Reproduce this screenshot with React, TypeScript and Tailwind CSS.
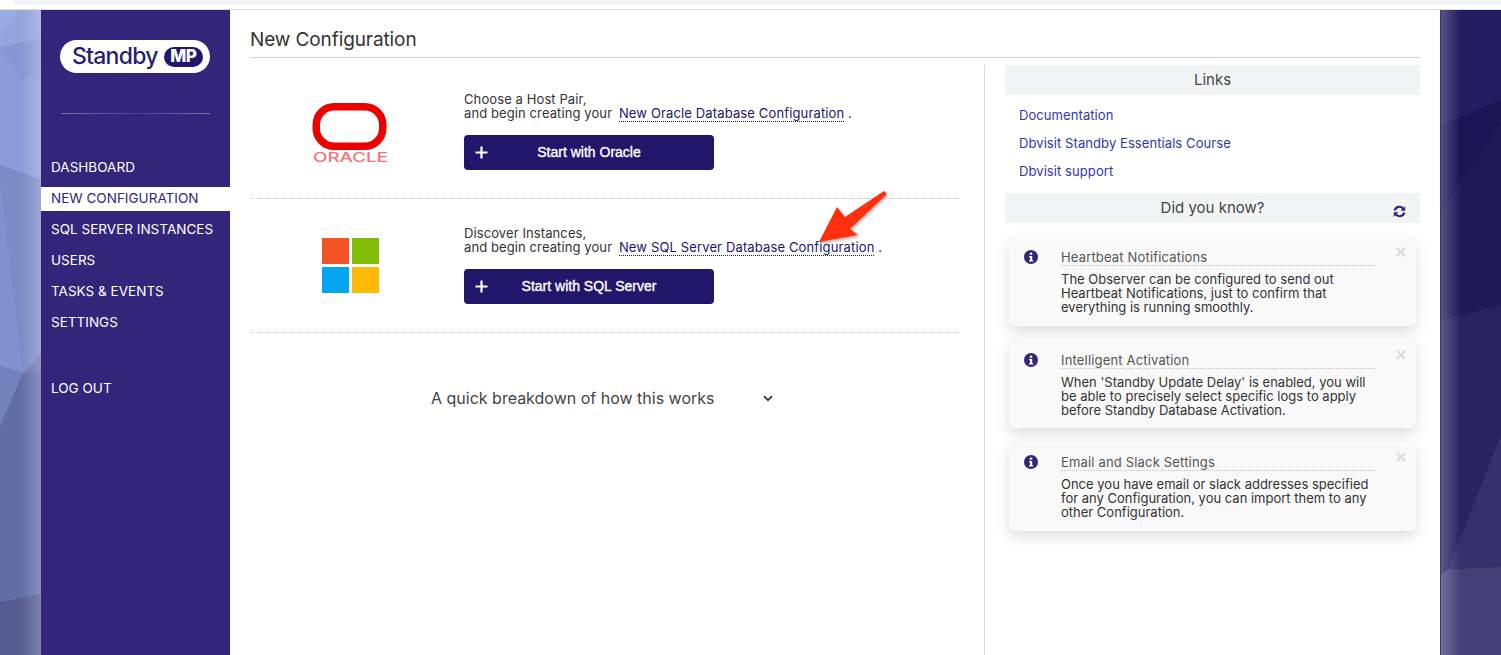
import React from "react";

const F = "font-['Inter','Noto_Sans',sans-serif]";

function LeftBg() {
  return (
    <svg className="h-full w-full block" viewBox="0 0 41 645" preserveAspectRatio="none">
      <defs>
        <linearGradient id="lg" x1="0" x2="1" y1="0" y2="0">
          <stop offset="0.5" stopColor="#ffffff" stopOpacity="0" />
          <stop offset="1" stopColor="#ffffff" stopOpacity="0.24" />
        </linearGradient>
      </defs>
      <polygon points="0,0 41,0 41,645 0,645" fill="#6a75ae" />
      <polygon points="0,0 41,0 41,170 0,155" fill="#8b9cd8" />
      <polygon points="0,0 20,0 0,28" fill="#9aaae2" />
      <polygon points="20,0 41,0 41,28 0,38 0,28" fill="#93a3dc" />
      <polygon points="0,38 41,28 41,60 22,70" fill="#8797d3" />
      <polygon points="0,155 41,170 41,345 23,363 0,356" fill="#7c8ac6" />
      <polygon points="0,170 23,363 0,356" fill="#8190ce" />
      <polygon points="0,356 23,363 0,417" fill="#7481bb" />
      <polygon points="23,363 41,345 41,360 30,365" fill="#7078ad" />
      <polygon points="0,417 23,363 41,360 41,584 0,592" fill="#626da6" />
      <polygon points="0,592 41,584 41,645 0,645" fill="#555c92" />
      <rect x="0" y="0" width="41" height="645" fill="url(#lg)" />
    </svg>
  );
}

function RightBg() {
  return (
    <svg className="h-full w-full block" viewBox="0 0 60 645" preserveAspectRatio="none">
      <defs>
        <linearGradient id="rg" x1="0" x2="1" y1="0" y2="0">
          <stop offset="0" stopColor="#ffffff" stopOpacity="0.24" />
          <stop offset="0.33" stopColor="#ffffff" stopOpacity="0" />
        </linearGradient>
      </defs>
      <polygon points="0,0 60,0 60,645 0,645" fill="#241c60" />
      <polygon points="0,115 60,90 60,111 0,203" fill="#1b1455" />
      <polygon points="0,203 60,111 60,295 0,310" fill="#201958" />
      <polygon points="0,310 60,295 60,425 7,559 0,565" fill="#2a2360" />
      <polygon points="60,425 60,557 7,559" fill="#36306c" />
      <polygon points="0,565 7,559 60,557 60,645 0,645" fill="#454078" />
      <rect x="0" y="0" width="60" height="645" fill="url(#rg)" />
    </svg>
  );
}

function Logo() {
  return (
    <div className="flex h-[33px] w-[150px] items-center rounded-full bg-white pl-[12px] pr-[7px]">
      <span className="font-['Inter',sans-serif] text-[23px] font-medium leading-none text-[#2a1f6d] tracking-[-0.75px]">Standby</span>
      <span className="ml-[6px] flex h-[20px] flex-1 items-center justify-center rounded-full bg-[#21166a] font-['Inter',sans-serif] text-[17px] font-extrabold leading-none tracking-[-0.5px] text-white">MP</span>
    </div>
  );
}

const nav = ["DASHBOARD", "NEW CONFIGURATION", "SQL SERVER INSTANCES", "USERS", "TASKS & EVENTS", "SETTINGS"];

function Sidebar() {
  return (
    <aside className="flex w-[189px] shrink-0 flex-col bg-[#33267a]">
      <div className="flex justify-center pr-[1px] pt-[30px]"><Logo /></div>
      <div className="mx-[20px] mt-[40px] h-px bg-gradient-to-r from-[#7d74ab] via-[#4a3f8c] to-[#7d74ab]" />
      <nav className="mt-[42px] flex flex-col gap-[7px]">
        {nav.map((n) => (
          <a key={n} className={n === "NEW CONFIGURATION"
            ? "flex h-[24px] items-center bg-white pb-[1px] pl-[10px] text-[13.5px] tracking-[0.02px] text-[#33267a]"
            : "flex h-[24px] items-center pb-[1px] pl-[10px] text-[13.5px] tracking-[0.02px] text-white"}>{n}</a>
        ))}
        <a className="mt-[35px] flex h-[24px] items-center pb-[1px] pl-[10px] text-[13.5px] tracking-[0.02px] text-white">LOG OUT</a>
      </nav>
    </aside>
  );
}

function OracleLogo() {
  return (
    <svg width="78" height="62" viewBox="0 0 78 62">
      <rect x="5.25" y="5.75" width="66.5" height="39.5" rx="18" fill="none" stroke="#ee0000" strokeWidth="7.5" />
      <text x="39.5" y="60.5" textAnchor="middle" textLength="75" lengthAdjust="spacingAndGlyphs" fontFamily="Inter, sans-serif" fontSize="13" fontWeight="500" fill="#f4717a">ORACLE</text>
    </svg>
  );
}

function MsLogo() {
  return (
    <div className="grid grid-cols-[27px_27px] grid-rows-[26px_26px] gap-[3px]">
      <div className="bg-[#f35325]" /><div className="bg-[#81bc06]" />
      <div className="bg-[#05a6f0]" /><div className="bg-[#ffba08]" />
    </div>
  );
}

function Row({ logo, l1, link, btn }: { logo: React.ReactNode; l1: string; link: string; btn: string }) {
  return (
    <div className="flex h-[134px] border-b border-dotted border-[#c8c8c8]">
      <div className="flex w-[200px] shrink-0 items-center justify-center">{logo}</div>
      <div className="pl-[14px] pt-[27px]">
        <div className="text-[13px] leading-[14px] tracking-[0.1px] text-[#333]">{l1}</div>
        <div className="text-[13px] leading-[14px] tracking-[0.1px] text-[#333]">
          and begin creating your <a className="ml-[3px] border-b border-dotted border-[#21166a] text-[#21166a] tracking-[0.14px]">{link}</a> .
        </div>
        <button className="mt-[15px] flex h-[35px] w-[250px] items-center rounded-[4px] bg-[#21166a] pl-[11px] font-['Liberation_Sans',sans-serif] text-[14px] text-white [-webkit-text-stroke:0.35px_white]">
          <svg width="13" height="13" viewBox="0 0 13 13" className="shrink-0"><path d="M6.5 0.5v12M0.5 6.5h12" stroke="#fff" strokeWidth="2.2" /></svg>
          <span className="flex-1 pr-[24px] text-center">{btn}</span>
        </button>
      </div>
    </div>
  );
}

function Card({ title, lines }: { title: string; lines: string[] }) {
  return (
    <div className="relative mx-[4px] flex rounded-[6px] bg-[#f9f9f9] pb-[11.5px] pt-[13px] shadow-[0_6px_14px_rgba(0,0,0,0.13)]">
      <div className="w-[52px] shrink-0 pl-[14.5px] pt-[1px]">
        <svg width="14" height="14" viewBox="0 0 14 14">
          <circle cx="7" cy="7" r="7" fill="#33267a" />
          <rect x="5.8" y="2.6" width="2.4" height="2.2" fill="#fff" />
          <path d="M5 6h3.2v4.2h1v1.2H5v-1.2h1V7.2H5z" fill="#fff" />
        </svg>
      </div>
      <div className="w-[314px]">
        <div className="border-b border-dotted border-[#c4c4c4] text-[13px] leading-[16px] tracking-[0.17px] text-[#555]">{title}</div>
        <div className="mt-[6px] text-[13px] leading-[14px] text-[#333]">
          {lines.map((l) => <div key={l} className="whitespace-nowrap">{l}</div>)}
        </div>
      </div>
      <svg className="absolute right-[10px] top-[11px]" width="10" height="10" viewBox="0 0 10 10"><path d="M1 1l8 8M9 1l-8 8" stroke="#dcdcdc" strokeWidth="2.4" /></svg>
    </div>
  );
}

function Arrow() {
  return (
    <svg className="pointer-events-none absolute left-[810px] top-[180px]" width="90" height="72" viewBox="810 180 90 72">
      <defs><filter id="as" x="-20%" y="-20%" width="150%" height="150%"><feDropShadow dx="1" dy="2" stdDeviation="1.5" floodColor="#000" floodOpacity="0.3" /></filter></defs>
      <polygon points="819,242 837,207 845,217 884,191 887,194 850,229 858,235" fill="#ff2f0a" filter="url(#as)" />
    </svg>
  );
}

export default function App() {
  return (
    <div className={`relative flex h-[655px] w-[1501px] flex-col overflow-hidden bg-white ${F}`}>
      <div className="h-[10px] shrink-0 border-b border-[#dedede] bg-white pl-[13px] pr-0">
        <div className="h-[5px] rounded-bl-[10px] bg-[#f1f3f4]" />
      </div>
      <div className="flex min-h-0 flex-1">
        <div className="w-[41px] shrink-0"><LeftBg /></div>
        <Sidebar />
        <main className="flex w-[1210px] shrink-0 flex-col bg-white pl-[20px] pr-[20px]">
          <h1 className="flex h-[48px] shrink-0 items-center border-b border-[#d0d0d0] pt-[14px] text-[19px] font-normal tracking-[-0.1px] text-[#333]">New Configuration</h1>
          <div className="flex min-h-0 flex-1 pt-[7px]">
            <div className="w-[709px] shrink-0">
              <Row logo={<OracleLogo />} l1="Choose a Host Pair," link="New Oracle Database Configuration" btn="Start with Oracle" />
              <Row logo={<MsLogo />} l1="Discover Instances," link="New SQL Server Database Configuration" btn="Start with SQL Server" />
              <div className="mt-[53px] flex items-center pl-[181px]">
                <span className="w-[322px] text-[16px] text-[#444]">A quick breakdown of how this works</span>
                <svg width="10" height="7" viewBox="0 0 10 7" className="ml-[10px]"><path d="M1 1.2l4 4 4-4" fill="none" stroke="#333" strokeWidth="1.7" /></svg>
              </div>
            </div>
            <div className="ml-[25px] w-px shrink-0 bg-[#dcdcdc]" />
            <div className="ml-[20px] w-[415px] shrink-0">
              <div className="flex h-[30px] items-center justify-center bg-[#f3f4f6] text-[15px] text-[#444]">Links</div>
              <div className="flex flex-col gap-[7px] pl-[14px] pt-[10px] text-[13px] leading-[21px] tracking-[0.08px] text-[#3236ad]">
                <a>Documentation</a>
                <a>Dbvisit Standby Essentials Course</a>
                <a>Dbvisit support</a>
              </div>
              <div className="relative mt-[11px] flex h-[30px] items-center justify-center bg-[#f3f4f6] text-[15px] text-[#444]">
                Did you know?
                <svg className="absolute right-[14px] top-[12px]" width="13" height="13" viewBox="0 0 24 24" fill="none" stroke="#33267a" strokeWidth="4">
                  <path d="M3 10a9 9 0 0 1 16-3l2 2" /><path d="M21 14a9 9 0 0 1-16 3l-2-2" />
                  <path d="M22 3v7h-7z" fill="#33267a" strokeWidth="1" /><path d="M2 21v-7h7z" fill="#33267a" strokeWidth="1" />
                </svg>
              </div>
              <div className="mt-[13px] flex flex-col gap-[13px]">
                <Card title="Heartbeat Notifications" lines={["The Observer can be configured to send out", "Heartbeat Notifications, just to confirm that", "everything is running smoothly."]} />
                <Card title="Intelligent Activation" lines={["When 'Standby Update Delay' is enabled, you will", "be able to precisely select specific logs to apply", "before Standby Database Activation."]} />
                <Card title="Email and Slack Settings" lines={["Once you have email or slack addresses specified", "for any Configuration, you can import them to any", "other Configuration."]} />
              </div>
            </div>
          </div>
        </main>
        <div className="flex-1 border-l border-[#3a3288]"><RightBg /></div>
      </div>
      <Arrow />
    </div>
  );
}
